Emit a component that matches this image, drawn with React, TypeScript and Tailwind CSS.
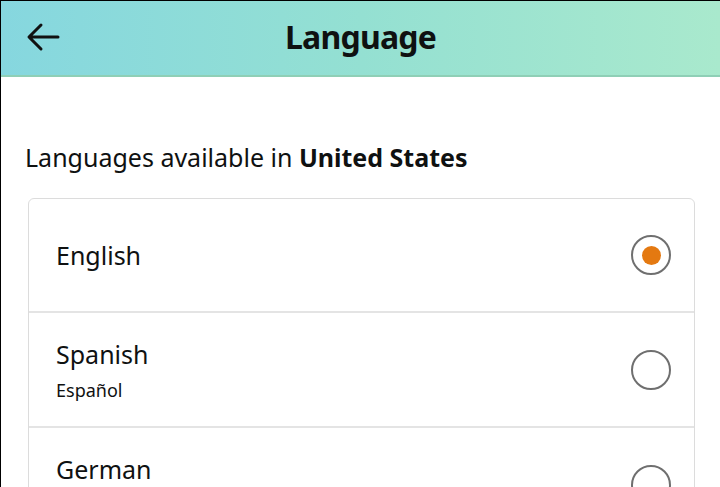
const LANGUAGES = [
  { name: "English", native: "", selected: true },
  { name: "Spanish", native: "Español", selected: false },
  { name: "German", native: "Deutsch", selected: false },
];

function Radio({ checked }: { checked: boolean }) {
  return (
    <span className="flex h-[40px] w-[40px] items-center justify-center rounded-full border-2 border-[#6f6f6f] bg-white">
      {checked && <span className="h-[19px] w-[19px] rounded-full bg-[#e47911]" />}
    </span>
  );
}

export default function App() {
  return (
    <div
      className="h-[487px] w-[720px] overflow-hidden border-l border-t border-black bg-white text-[#111]"
      style={{ fontFamily: '"Noto Sans", "Open Sans", sans-serif' }}
    >
      {/* Header */}
      <header className="relative flex h-[76px] items-center justify-center border-b-2 border-[#8fcfb6] bg-gradient-to-r from-[#86d7df] via-[#94e0d2] to-[#a9e9cd]">
        <button className="absolute left-[21px] top-[17px] p-1 text-[#111]">
          <svg width="34" height="30" viewBox="0 0 34 30" fill="none" stroke="currentColor" strokeWidth="3" strokeLinecap="round" strokeLinejoin="round">
            <path d="M32 15H4M15 3L3 15l12 12" />
          </svg>
        </button>
        <h1 className="-mt-[2px] text-[32px] font-bold tracking-tight text-[#0f1111]">Language</h1>
      </header>

      <main className="px-[24px] pt-[62px]">
        <p className="text-[25px] leading-[37px] text-[#0f1111]">
          Languages available in <span className="font-bold">United States</span>
        </p>

        <div className="mt-[22px] ml-[3px] w-[667px] rounded-[6px] border border-[#dcdcdc]">
          {LANGUAGES.map((lang, i) => (
            <div
              key={lang.name}
              className={`flex items-center justify-between pl-[27px] pr-[23px] ${
                i > 0 ? "h-[115px] border-t-2 border-[#e4e4e4]" : "h-[112px]"
              }`}
            >
              <div className="flex flex-col">
                <span className="text-[25px] leading-[32px] text-[#0f1111]">{lang.name}</span>
                {lang.native && (
                  <span className="mt-[9px] text-[18px] leading-[22px] text-[#0f1111]">{lang.native}</span>
                )}
              </div>
              <Radio checked={lang.selected} />
            </div>
          ))}
        </div>
      </main>
    </div>
  );
}
